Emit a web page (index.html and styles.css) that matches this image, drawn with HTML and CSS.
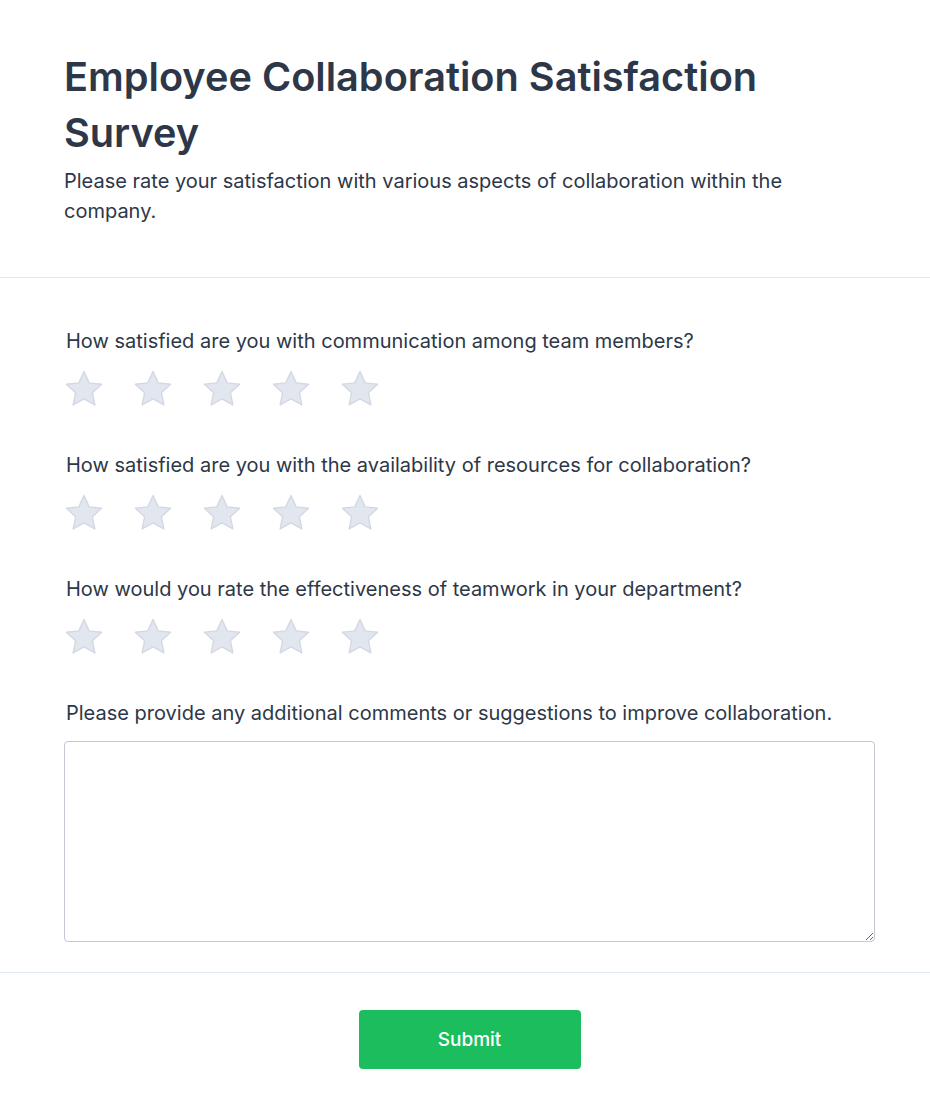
FILE: index.html
```html
<!DOCTYPE html>
<html lang="en">
<head>
  <meta charset="UTF-8" />
  <meta name="viewport" content="width=device-width, initial-scale=1.0" />
  <title>Employee Collaboration Satisfaction Survey</title>
  <link rel="stylesheet" href="styles.css">
</head>
<body>
  <header class="survey-head">
    <h1>Employee Collaboration Satisfaction Survey</h1>
    <p>Please rate your satisfaction with various aspects of collaboration within the company.</p>
  </header>
  <form class="survey-body" autocomplete="off">
    <div class="question">
      <label>How satisfied are you with communication among team members?</label>
      <div class="stars">
        <svg viewBox="0 0 40 40"><polygon points="20,2.5 25.17,13.88 37.59,15.28 28.37,23.72 30.87,35.97 20,29.8 9.13,35.97 11.63,23.72 2.41,15.28 14.83,13.88"/></svg>
        <svg viewBox="0 0 40 40"><polygon points="20,2.5 25.17,13.88 37.59,15.28 28.37,23.72 30.87,35.97 20,29.8 9.13,35.97 11.63,23.72 2.41,15.28 14.83,13.88"/></svg>
        <svg viewBox="0 0 40 40"><polygon points="20,2.5 25.17,13.88 37.59,15.28 28.37,23.72 30.87,35.97 20,29.8 9.13,35.97 11.63,23.72 2.41,15.28 14.83,13.88"/></svg>
        <svg viewBox="0 0 40 40"><polygon points="20,2.5 25.17,13.88 37.59,15.28 28.37,23.72 30.87,35.97 20,29.8 9.13,35.97 11.63,23.72 2.41,15.28 14.83,13.88"/></svg>
        <svg viewBox="0 0 40 40"><polygon points="20,2.5 25.17,13.88 37.59,15.28 28.37,23.72 30.87,35.97 20,29.8 9.13,35.97 11.63,23.72 2.41,15.28 14.83,13.88"/></svg>
      </div>
    </div>
    <div class="question">
      <label>How satisfied are you with the availability of resources for collaboration?</label>
      <div class="stars">
        <svg viewBox="0 0 40 40"><polygon points="20,2.5 25.17,13.88 37.59,15.28 28.37,23.72 30.87,35.97 20,29.8 9.13,35.97 11.63,23.72 2.41,15.28 14.83,13.88"/></svg>
        <svg viewBox="0 0 40 40"><polygon points="20,2.5 25.17,13.88 37.59,15.28 28.37,23.72 30.87,35.97 20,29.8 9.13,35.97 11.63,23.72 2.41,15.28 14.83,13.88"/></svg>
        <svg viewBox="0 0 40 40"><polygon points="20,2.5 25.17,13.88 37.59,15.28 28.37,23.72 30.87,35.97 20,29.8 9.13,35.97 11.63,23.72 2.41,15.28 14.83,13.88"/></svg>
        <svg viewBox="0 0 40 40"><polygon points="20,2.5 25.17,13.88 37.59,15.28 28.37,23.72 30.87,35.97 20,29.8 9.13,35.97 11.63,23.72 2.41,15.28 14.83,13.88"/></svg>
        <svg viewBox="0 0 40 40"><polygon points="20,2.5 25.17,13.88 37.59,15.28 28.37,23.72 30.87,35.97 20,29.8 9.13,35.97 11.63,23.72 2.41,15.28 14.83,13.88"/></svg>
      </div>
    </div>
    <div class="question">
      <label>How would you rate the effectiveness of teamwork in your department?</label>
      <div class="stars">
        <svg viewBox="0 0 40 40"><polygon points="20,2.5 25.17,13.88 37.59,15.28 28.37,23.72 30.87,35.97 20,29.8 9.13,35.97 11.63,23.72 2.41,15.28 14.83,13.88"/></svg>
        <svg viewBox="0 0 40 40"><polygon points="20,2.5 25.17,13.88 37.59,15.28 28.37,23.72 30.87,35.97 20,29.8 9.13,35.97 11.63,23.72 2.41,15.28 14.83,13.88"/></svg>
        <svg viewBox="0 0 40 40"><polygon points="20,2.5 25.17,13.88 37.59,15.28 28.37,23.72 30.87,35.97 20,29.8 9.13,35.97 11.63,23.72 2.41,15.28 14.83,13.88"/></svg>
        <svg viewBox="0 0 40 40"><polygon points="20,2.5 25.17,13.88 37.59,15.28 28.37,23.72 30.87,35.97 20,29.8 9.13,35.97 11.63,23.72 2.41,15.28 14.83,13.88"/></svg>
        <svg viewBox="0 0 40 40"><polygon points="20,2.5 25.17,13.88 37.59,15.28 28.37,23.72 30.87,35.97 20,29.8 9.13,35.97 11.63,23.72 2.41,15.28 14.83,13.88"/></svg>
      </div>
    </div>
    <div class="question comments">
      <label for="comments">Please provide any additional comments or suggestions to improve collaboration.</label>
      <textarea id="comments"></textarea>
    </div>
  </form>
  <footer class="survey-foot">
    <button type="submit">Submit</button>
  </footer>
</body>
</html>
```

FILE: styles.css
```css
:root {
  --ink: #2d3748;
  --line: #e2e8f0;
  --star: #e2e6ef;
  --star-edge: #d3d8e3;
  --green: #1bbd5d;
  --sans: Inter, 'Noto Sans', sans-serif;
}
* { box-sizing: border-box; }
body {
  margin: 0;
  background: #fff;
  color: var(--ink);
  font-family: var(--sans);
}
.survey-head {
  padding: 49px 55px 51px 64px;
  border-bottom: 1px solid var(--line);
}
.survey-head h1 {
  margin: 0 0 5px;
  font-size: 39.7px;
  line-height: 56px;
  font-weight: 600;
}
.survey-head p {
  margin: 0;
  font-size: 20px;
  line-height: 30px;
  font-weight: 400;
}
.survey-body {
  padding: 49px 55px 30px 64px;
  border-bottom: 1px solid var(--line);
}
.question { margin-bottom: 42px; }
.question.comments { margin-bottom: 0; }
.question label {
  display: block;
  margin: 0 0 14px;
  padding-left: 2px;
  font-size: 20px;
  line-height: 28px;
  font-weight: 400;
}
.stars {
  display: flex;
  gap: 29px;
}
.stars svg {
  width: 40px;
  height: 40px;
  cursor: pointer;
}
.stars polygon {
  fill: var(--star);
  stroke: var(--star-edge);
  stroke-width: 1.4;
  stroke-linejoin: round;
}
textarea {
  display: block;
  width: 100%;
  height: 201px;
  border: 1px solid #c3c8d4;
  border-radius: 4px;
  font-family: var(--sans);
  font-size: 16px;
  padding: 8px 10px;
}
.survey-foot {
  display: flex;
  justify-content: center;
  padding: 37px 55px 50px 64px;
}
.survey-foot button {
  width: 222px;
  height: 59px;
  border: 0;
  border-radius: 4px;
  background: var(--green);
  color: #fff;
  font-family: var(--sans);
  font-size: 19px;
  font-weight: 500;
  cursor: pointer;
}
```
